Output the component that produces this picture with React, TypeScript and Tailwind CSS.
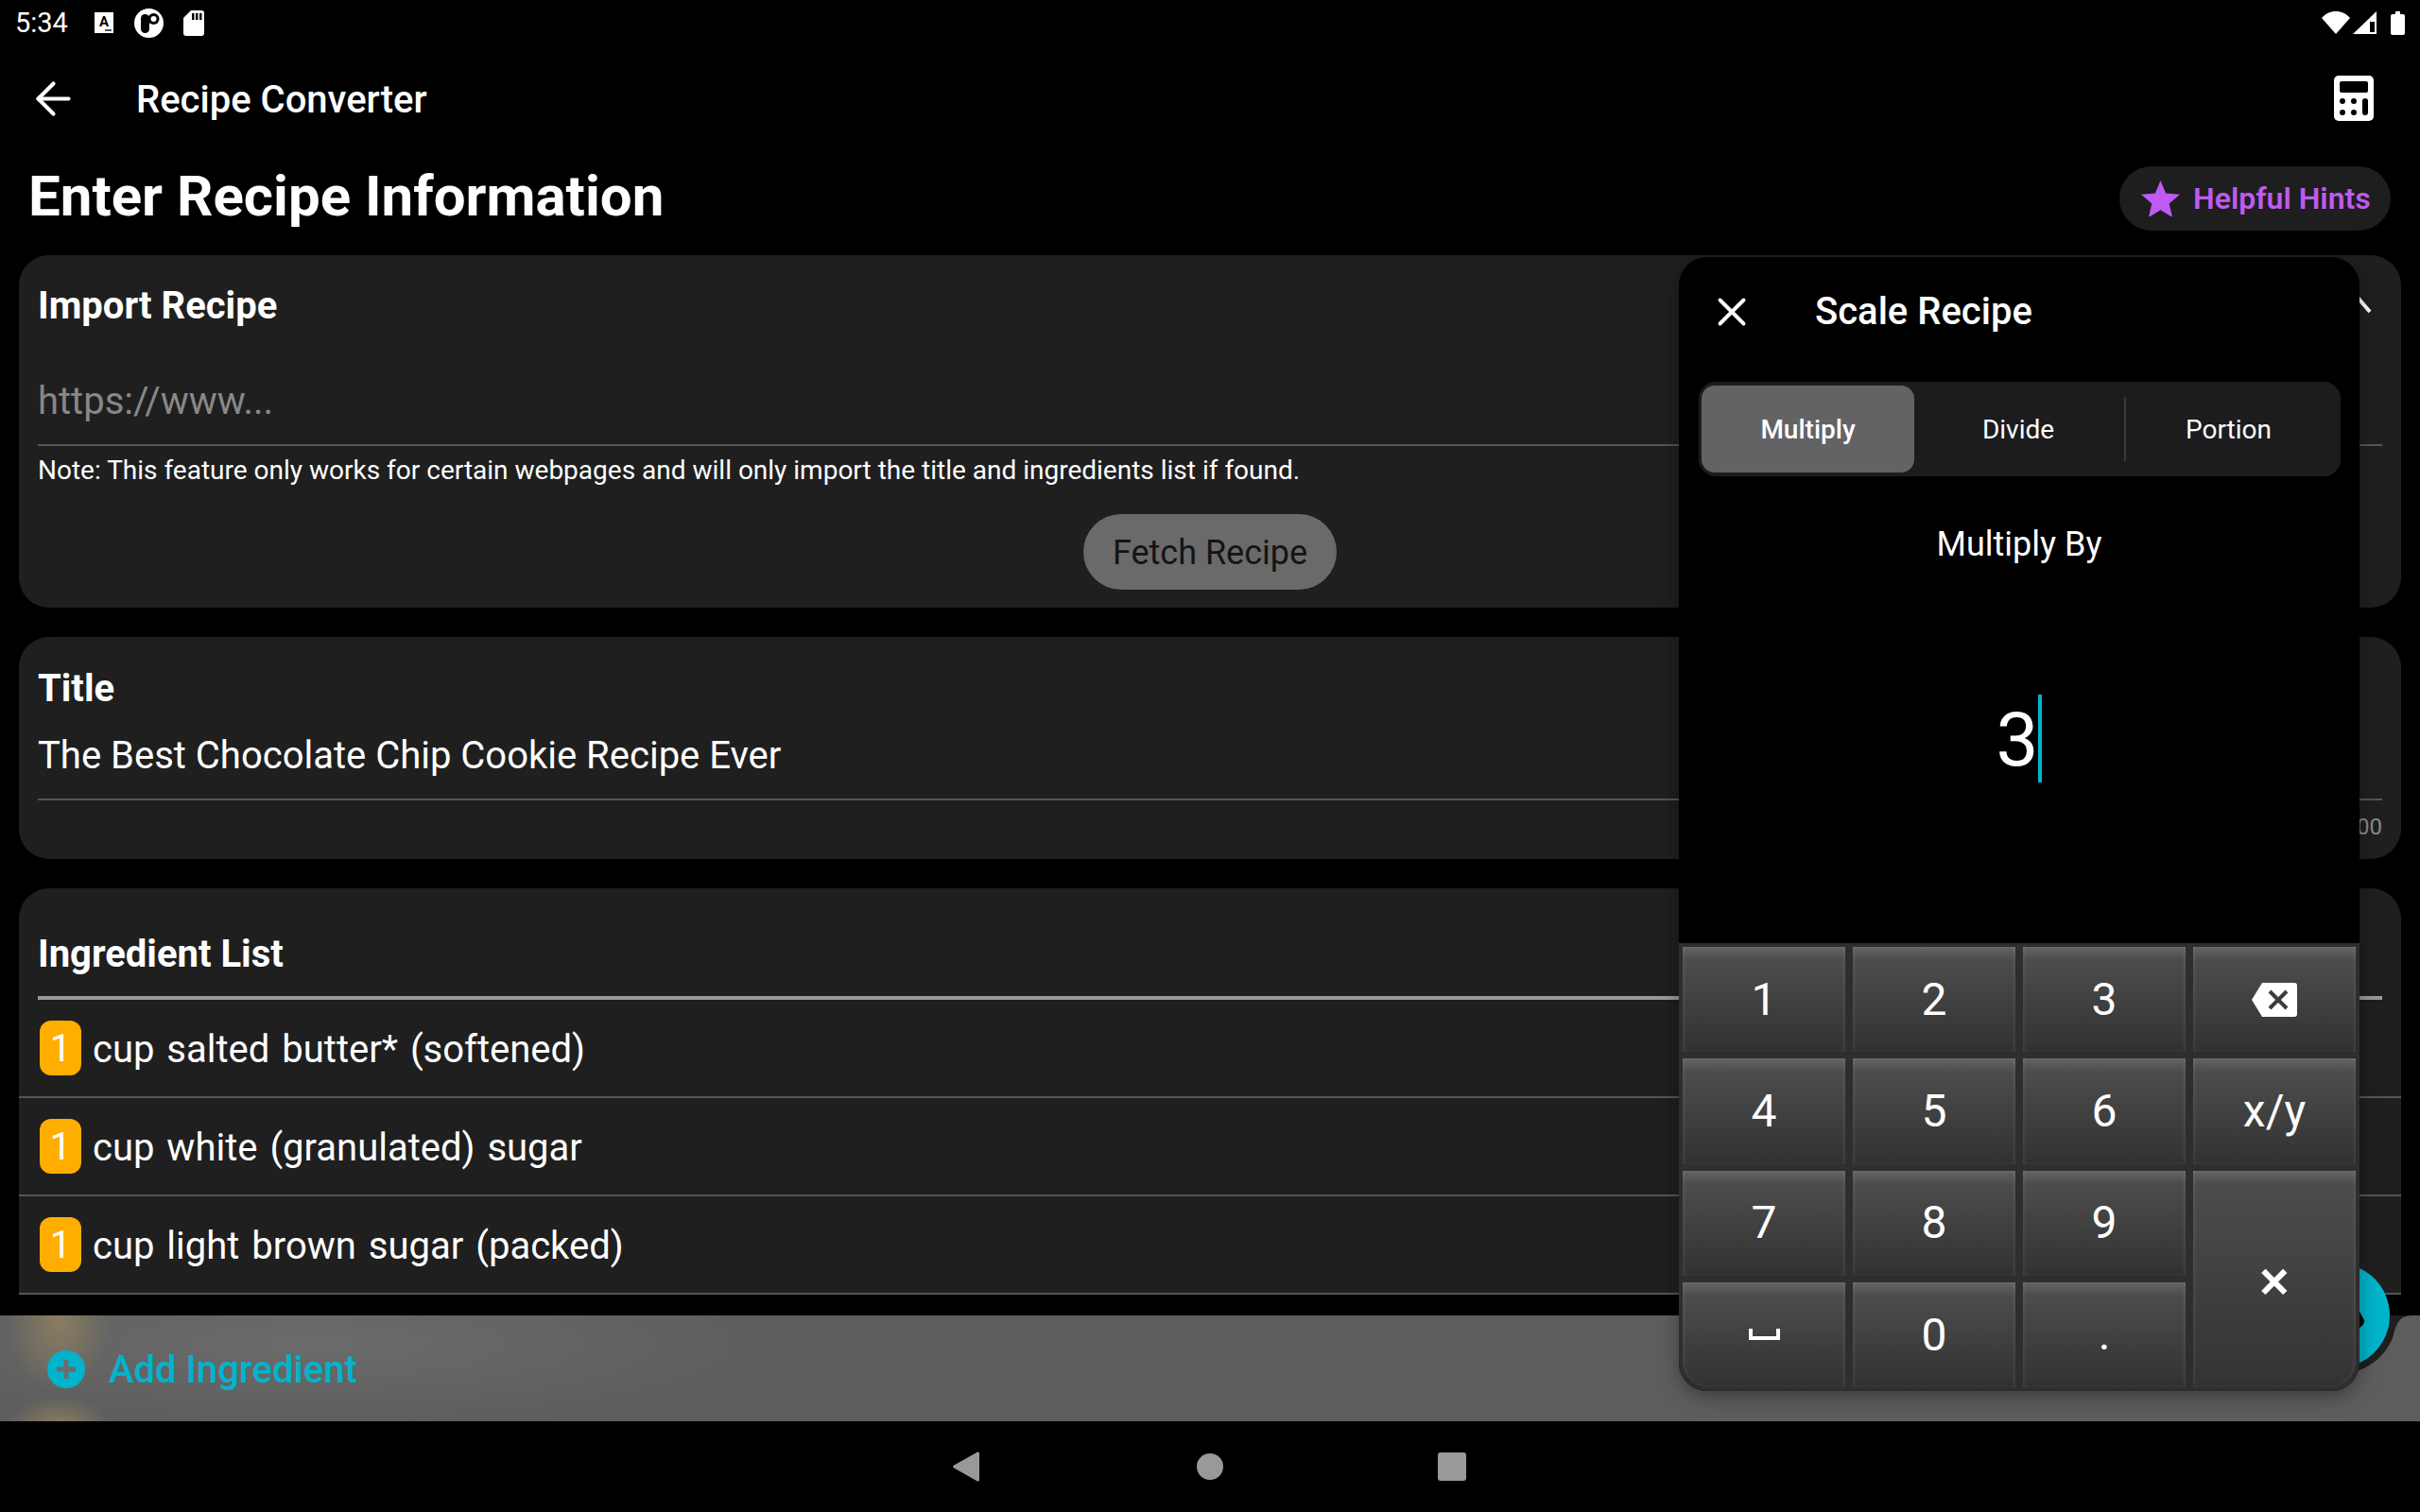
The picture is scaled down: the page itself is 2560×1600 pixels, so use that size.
import { ArrowLeft, X } from "lucide-react";

const INGREDIENTS = ["cup salted butter* (softened)", "cup white (granulated) sugar", "cup light brown sugar (packed)"];

const KEY_FACE =
  "flex items-center justify-center text-[48px] text-white bg-[linear-gradient(#646464,#4c4c4c_14px,#343434_calc(100%-8px),#2f2f2f)] shadow-[inset_2px_0_3px_#ffffff12,inset_-2px_0_3px_#ffffff12]";

function StatusBar() {
  return (
    <div className="flex h-[48px] flex-none items-center justify-between pl-[16px] pr-[16px]">
      <div className="flex items-center">
        <span className="text-[29px] leading-none text-white">5:34</span>
        <div className="relative ml-[28px] flex h-[22px] w-[20px] items-center justify-center bg-white pb-[2px] text-[15px] font-bold leading-none text-black">
          A
          <span className="absolute bottom-[2px] right-[2px] h-[2px] w-[7px] bg-[#555]" />
        </div>
        <svg className="ml-[22px]" width="31" height="31" viewBox="0 0 31 31">
          <circle cx="15.5" cy="15.5" r="15.5" fill="#fff" />
          <rect x="7" y="6" width="9" height="20" rx="4.5" fill="#000" />
          <circle cx="20.5" cy="11" r="6" fill="#000" />
          <circle cx="20.5" cy="11" r="3" fill="#fff" />
        </svg>
        <svg className="ml-[21px]" width="22" height="27" viewBox="0 0 22 27">
          <path d="M8 0H19a3 3 0 0 1 3 3V24a3 3 0 0 1-3 3H3a3 3 0 0 1-3-3V8z" fill="#fff" />
          <path d="M9 3h2.5v7H9zM13 3h2.5v7H13zM17 3h2.5v7H17z" fill="#000" />
        </svg>
      </div>
      <div className="flex items-center">
        <svg width="30" height="24" viewBox="0 0 30 24">
          <path d="M0 7C4 2.5 9 0 15 0s11 2.5 15 7L15 24z" fill="#fff" />
        </svg>
        <svg className="ml-[3px]" width="25" height="24" viewBox="0 0 25 24">
          <path d="M25 0V24H0z" fill="#fff" />
          <path d="M18 11h5v11h-5z" fill="#000" />
        </svg>
        <svg className="ml-[15px]" width="15" height="25" viewBox="0 0 15 25">
          <path d="M5 0h5v3h3a2 2 0 0 1 2 2V23a2 2 0 0 1-2 2H2a2 2 0 0 1-2-2V5a2 2 0 0 1 2-2h3z" fill="#fff" />
        </svg>
      </div>
    </div>
  );
}

function AppBar() {
  return (
    <div className="flex h-[112px] flex-none items-center justify-between pl-[29px] pr-[49px]">
      <div className="flex items-center gap-[60px]">
        <ArrowLeft size={55} strokeWidth={1.8} className="text-white" />
        <span className="pt-[3px] text-[40px] font-medium leading-none text-white">Recipe Converter</span>
      </div>
      <svg width="42" height="48" viewBox="0 0 42 48">
        <rect width="42" height="48" rx="5" fill="#fff" />
        <rect x="6" y="6" width="30" height="12" rx="2" fill="#000" />
        <circle cx="9" cy="27" r="3" fill="#000" />
        <circle cx="21" cy="27" r="3" fill="#000" />
        <circle cx="9" cy="39" r="3" fill="#000" />
        <circle cx="21" cy="39" r="3" fill="#000" />
        <rect x="30" y="24" width="6" height="18" rx="3" fill="#000" />
      </svg>
    </div>
  );
}

function PageHeading() {
  return (
    <div className="flex h-[110px] flex-none items-center justify-between pb-[10px] pl-[30px] pr-[31px]">
      <h1 className="mb-[4px] text-[60px] font-bold leading-none text-white">Enter Recipe Information</h1>
      <div className="flex h-[68px] w-[287px] items-center gap-[14px] rounded-full bg-[#1e1e1e] pl-[23px]">
        <svg width="41" height="38" viewBox="0 0 41 38">
          <path d="M20.5 0l5.6 13.6 14.9 1.2-11.3 9.8 3.4 14.4-12.6-7.8-12.6 7.8 3.4-14.4L0 14.8l14.9-1.2z" fill="#bf5af2" />
        </svg>
        <span className="text-[32px] font-semibold leading-none text-[#bf5af2]">Helpful Hints</span>
      </div>
    </div>
  );
}

function ImportCard() {
  return (
    <section className="flex h-[373px] flex-none flex-col rounded-[32px] bg-[#1f1f1f] px-[20px] pt-[30px]">
      <div className="flex h-[48px] items-center justify-between">
        <span className="text-[40px] font-bold leading-[48px] text-white">Import Recipe</span>
        <svg className="mr-[6px]" width="48" height="48" viewBox="0 0 48 48">
          <path d="M7 30L24 10l17 20" fill="none" stroke="#fff" strokeWidth="4" />
        </svg>
      </div>
      <div className="flex h-[124px] items-end border-b-2 border-[#555] pb-[21px] text-[40px] leading-[48px] text-[#888]">
        https://www...
      </div>
      <p className="mt-[8px] text-[28px] leading-[36px] text-white">
        Note: This feature only works for certain webpages and will only import the title and ingredients list if found.
      </p>
      <button className="mt-[28px] h-[80px] w-[268px] self-center rounded-full bg-[#6a6a6a] pt-[2px] text-[36px] text-[#141414]">
        Fetch Recipe
      </button>
    </section>
  );
}

function TitleCard() {
  return (
    <section className="flex h-[235px] flex-none flex-col rounded-[32px] bg-[#1f1f1f] px-[20px] pt-[31px]">
      <span className="text-[40px] font-bold leading-[48px] text-white">Title</span>
      <div className="mt-[23px] border-b-2 border-[#555] pb-[21px] text-[40px] leading-[48px] text-white">
        The Best Chocolate Chip Cookie Recipe Ever
      </div>
      <span className="mt-[13px] text-right text-[24px] leading-[30px] text-[#8a8a8a]">42/100</span>
    </section>
  );
}

function IngredientCard() {
  return (
    <section className="flex-none rounded-t-[32px] bg-[#1f1f1f] pt-[46px]">
      <div className="mx-[20px] border-b-4 border-[#999] pb-[20px] text-[40px] font-bold leading-[48px] text-white">
        Ingredient List
      </div>
      {INGREDIENTS.map((item) => (
        <div key={item} className="flex h-[104px] items-center gap-[12px] border-b-2 border-[#555] pl-[22px]">
          <span className="flex h-[58px] w-[44px] items-center justify-center rounded-[12px] bg-[#ffae00] pt-[2px] text-[40px] leading-none text-white">
            1
          </span>
          <span className="pt-[3px] text-[40px] leading-none text-white [word-spacing:3px]">{item}</span>
        </div>
      ))}
    </section>
  );
}

function AddIngredientBar() {
  return (
    <div className="relative flex h-[112px] flex-none items-center gap-[25px] bg-[#5d5d5d] bg-[radial-gradient(ellipse_55px_75px_at_62px_6px,#8a7e60,transparent),radial-gradient(ellipse_55px_30px_at_62px_116px,#8a7e60,transparent),radial-gradient(ellipse_520px_90px_at_330px_30px,#6b6b6b,transparent)] pl-[50px]">
      <svg className="mt-[1px]" width="40" height="40" viewBox="0 0 40 40">
        <circle cx="20" cy="20" r="20" fill="#00b4cc" />
        <path d="M10 17.5h20v5H10zM17.5 10h5v20h-5z" fill="#6b6b6b" />
      </svg>
      <span className="pt-[3px] text-[40px] font-medium leading-none text-[#00b4cc]">Add Ingredient</span>
      <svg className="absolute left-[2400px] top-0" width="160" height="80" viewBox="0 0 160 80">
        <path d="M10 0H152C140 0 135 6 131 24A63 63 0 0 1 10 0Z" fill="#1e1e1e" />
      </svg>
    </div>
  );
}

function NavBar() {
  return (
    <div className="flex h-[96px] flex-none items-center justify-center pr-[2px]">
      <svg width="28" height="32" viewBox="0 0 28 32">
        <path d="M26 .5a1.5 1.5 0 0 1 2 1.5V30a1.5 1.5 0 0 1-2 1.5L.8 17.2a1.6 1.6 0 0 1 0-2.4z" fill="#999" />
      </svg>
      <div className="ml-[230px] h-[28px] w-[28px] rounded-full bg-[#999]" />
      <div className="ml-[227px] h-[30px] w-[30px] rounded-[3px] bg-[#999]" />
    </div>
  );
}

function Keypad() {
  const digits = ["1", "2", "3", "del", "4", "5", "6", "x/y", "7", "8", "9"];

  return (
    <div className="mt-auto grid h-[474px] flex-none grid-cols-4 grid-rows-4 gap-x-[8px] gap-y-[7px] rounded-b-[30px] bg-[#2e2e2e] p-[4px]">
      {digits.map((key) => (
        <div key={key} className={KEY_FACE}>
          {key === "del" ? (
            <svg width="48" height="36" viewBox="0 0 48 36">
              <path d="M11 0H45a3 3 0 0 1 3 3V33a3 3 0 0 1-3 3H11L0 18z" fill="#fff" />
              <path d="M19 9l18 18M37 9L19 27" stroke="#3c3c3c" strokeWidth="4" />
            </svg>
          ) : (
            key
          )}
        </div>
      ))}
      <div className={`${KEY_FACE} col-start-4 row-span-2 row-start-3 rounded-br-[28px] pt-[5px] !text-[60px] font-medium`}>
        ×
      </div>
      <div className={`${KEY_FACE} col-start-1 row-start-4 rounded-bl-[28px]`}>
        <svg width="33" height="12" viewBox="0 0 33 12">
          <path d="M2 0V10H31V0" fill="none" stroke="#fff" strokeWidth="4" />
        </svg>
      </div>
      <div className={`${KEY_FACE} col-start-2 row-start-4 pt-[2px]`}>0</div>
      <div className={`${KEY_FACE} col-start-3 row-start-4`}>.</div>
    </div>
  );
}

function ScaleRecipeModal() {
  return (
    <div className="absolute left-[1776px] top-[272px] flex h-[1200px] w-[720px] flex-col rounded-[30px] bg-black shadow-[0_6px_20px_rgba(0,0,0,0.35)]">
      <div className="flex h-[116px] flex-none items-center gap-[63px] pl-[31px]">
        <X size={50} strokeWidth={1.9} className="text-white" />
        <span className="text-[40px] font-medium leading-none text-white">Scale Recipe</span>
      </div>
      <div className="ml-[21px] mr-[20px] mt-[16px] flex h-[100px] flex-none items-center rounded-[18px] bg-[#1c1c1e] px-[3px] text-[28px] text-white">
        <div className="flex h-[92px] w-[225px] items-center justify-center rounded-[14px] bg-[#636366] pt-[1px] font-medium">
          Multiply
        </div>
        <div className="flex w-[222px] items-center justify-center pr-[2px] pt-[1px]">Divide</div>
        <div className="h-[68px] w-[2px] bg-[#3a3a3c]" />
        <div className="flex w-[217px] items-center justify-center pt-[1px]">Portion</div>
      </div>
      <div className="mt-[48px] text-center text-[36px] leading-[48px] text-white">Multiply By</div>
      <div className="mt-[135px] flex items-start justify-center">
        <span className="mt-[2px] text-[80px] leading-[93px] text-white">3</span>
        <span className="h-[93px] w-[4px] bg-[#00b4d0]" />
      </div>
      <Keypad />
    </div>
  );
}

export default function App() {
  return (
    <div className="relative flex h-[1600px] w-[2560px] flex-col overflow-hidden bg-black [font-family:Roboto,sans-serif]">
      <StatusBar />
      <AppBar />
      <PageHeading />
      <div className="flex min-h-0 flex-1 flex-col gap-[31px] overflow-hidden px-[20px]">
        <ImportCard />
        <TitleCard />
        <IngredientCard />
      </div>
      <AddIngredientBar />
      <NavBar />

      <div className="absolute left-[2418px] top-[1337px] flex h-[110px] w-[110px] items-center justify-center rounded-full bg-[#00b4cc]">
        <svg className="ml-[20px] mt-[10px]" width="56" height="20" viewBox="0 0 56 20">
          <path d="M41 1L46 10Q47 14 41 18Z" fill="#000" />
        </svg>
      </div>
      <ScaleRecipeModal />
    </div>
  );
}
